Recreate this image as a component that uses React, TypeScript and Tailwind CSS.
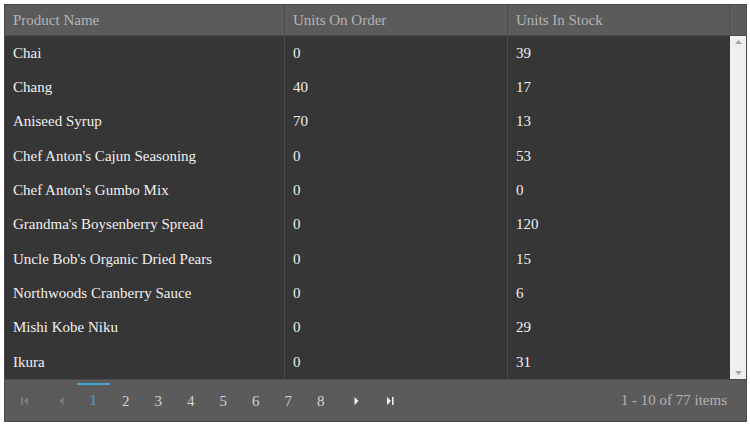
import React from 'react';

const rows: [string, number, number][] = [
  ['Chai', 0, 39],
  ['Chang', 40, 17],
  ['Aniseed Syrup', 70, 13],
  ["Chef Anton's Cajun Seasoning", 0, 53],
  ["Chef Anton's Gumbo Mix", 0, 0],
  ["Grandma's Boysenberry Spread", 0, 120],
  ["Uncle Bob's Organic Dried Pears", 0, 15],
  ['Northwoods Cranberry Sauce', 0, 6],
  ['Mishi Kobe Niku', 0, 29],
  ['Ikura', 0, 31],
];

const App = () => {
  return (
    <div className="w-[750px] h-[426px] bg-white p-[4px] pr-[3px]" style={{ fontFamily: '"Liberation Serif", serif' }}>
      <div className="h-[418px] flex flex-col border border-[#4a4a4a] bg-[#363636] text-[15px]">
        {/* Header */}
        <div className="flex h-[31px] bg-[#5b5b5b] border-b border-[#4c4c4c] text-[#b4b4b4] shrink-0">
          <div className="w-[280px] pl-[8px] flex items-center border-r border-[#4c4c4c]">Product Name</div>
          <div className="w-[223px] pl-[8px] flex items-center border-r border-[#4c4c4c]">Units On Order</div>
          <div className="flex-1 pl-[8px] flex items-center border-r border-[#4c4c4c]">Units In Stock</div>
          <div className="w-[16px]" />
        </div>

        {/* Body */}
        <div className="flex flex-1 min-h-0">
          <div className="flex-1 flex flex-col text-[#f0f0f0]">
            {rows.map(([name, order, stock]) => (
              <div key={name} className="flex h-[34.4px]">
                <div className="w-[280px] pl-[8px] flex items-center border-r border-[#4c4c4c]">{name}</div>
                <div className="w-[223px] pl-[8px] flex items-center border-r border-[#4c4c4c]">{order}</div>
                <div className="flex-1 pl-[8px] flex items-center">{stock}</div>
              </div>
            ))}
          </div>
          <div className="w-[16px] bg-[#f0f0f0] flex flex-col justify-between items-center py-[4px]">
            <svg width="7" height="4" viewBox="0 0 7 4"><path d="M0 4 L3.5 0 L7 4 Z" fill="#a3a3a3" /></svg>
            <svg width="7" height="4" viewBox="0 0 7 4"><path d="M0 0 L3.5 4 L7 0 Z" fill="#a3a3a3" /></svg>
          </div>
        </div>

        {/* Pager */}
        <div className="h-[42px] shrink-0 flex items-center bg-[#5b5b5b] border-t border-[#4c4c4c] text-[#d4d4d4] pl-[5px] pr-[19px]">
          <div className="w-[30px] flex justify-center items-center">
            <svg width="10" height="10" viewBox="0 0 10 10"><rect x="1" y="1" width="1.6" height="8" fill="#7e7e7e" /><path d="M8 1 L4 5 L8 9 Z" fill="#7e7e7e" /></svg>
          </div>
          <div className="w-[34px] ml-[4px] flex justify-center items-center">
            <svg width="7" height="10" viewBox="0 0 7 10"><path d="M5.5 1 L1.5 5 L5.5 9 Z" fill="#7e7e7e" /></svg>
          </div>
          <div className="flex -ml-[1px]">
            {[1, 2, 3, 4, 5, 6, 7, 8].map((n) => (
              <div
                key={n}
                className={
                  n === 1
                    ? 'w-[32.5px] h-[36px] flex items-center justify-center border-t-2 border-[#3fa4d8] text-[#3fa4d8] pb-[2px]'
                    : 'w-[32.5px] h-[36px] flex items-center justify-center pt-[2px]'
                }
              >
                {n}
              </div>
            ))}
          </div>
          <div className="w-[34px] ml-[2px] flex justify-center items-center">
            <svg width="7" height="10" viewBox="0 0 7 10"><path d="M1.5 1 L5.5 5 L1.5 9 Z" fill="#f2f2f2" /></svg>
          </div>
          <div className="w-[34px] flex justify-center items-center">
            <svg width="10" height="10" viewBox="0 0 10 10"><path d="M2 1 L6 5 L2 9 Z" fill="#f2f2f2" /><rect x="7" y="1" width="1.6" height="8" fill="#f2f2f2" /></svg>
          </div>
          <div className="ml-auto text-[#b4b4b4]">1 - 10 of 77 items</div>
        </div>
      </div>
    </div>
  );
};

export default App;
